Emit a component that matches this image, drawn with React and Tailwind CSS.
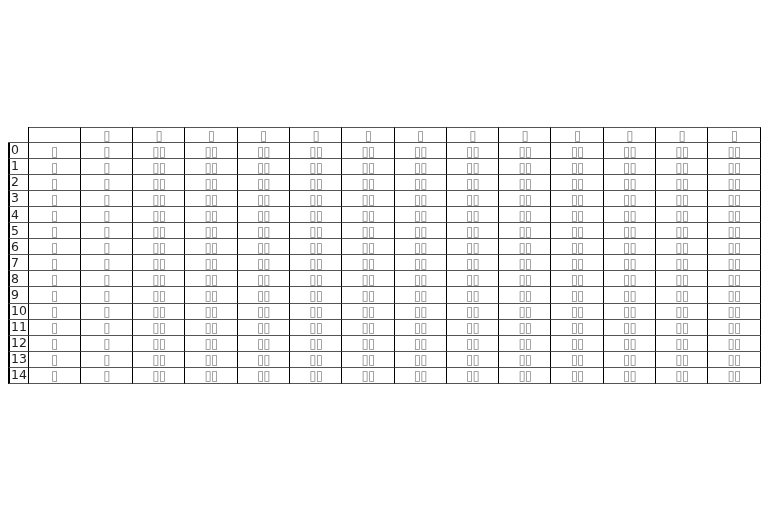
const COLS = 14;
const ROWS = 15;
const T = "\u25AF";

const hb = "border-b border-b-[#555]";
const tofu = "text-[13.5px] leading-[12px] tracking-[-1px] text-[#8a8a8a]";

export default function App() {
  return (
    <div className="flex h-[511px] w-[768px] items-center justify-center bg-white font-['DejaVu_Sans',sans-serif] text-[12.5px] leading-none">
      <div className="grid grid-cols-[20.5px_repeat(14,52.3px)] auto-rows-[16.06px] will-change-transform">
        <div className={`border-r border-r-black ${hb}`} />
        {Array.from({ length: COLS }, (_, c) => (
          <div key={c} className={`flex items-center justify-center border-t border-t-[#555] border-r border-r-black ${hb} ${tofu}`}>
            {c === 0 ? "" : T}
          </div>
        ))}
        {Array.from({ length: ROWS }, (_, r) => (
          <Row key={r} r={r} />
        ))}
      </div>
    </div>
  );
}

function Row({ r }) {
  return (
    <>
      <div className={`flex items-center border-l-2 border-l-black border-r border-r-black ${hb} pl-px text-[#222]`}>{r}</div>
      {Array.from({ length: COLS }, (_, c) => (
        <div key={c} className={`flex items-center justify-center border-r border-r-black ${hb} ${tofu}`}>
          {c < 2 ? T : T + T}
        </div>
      ))}
    </>
  );
}
